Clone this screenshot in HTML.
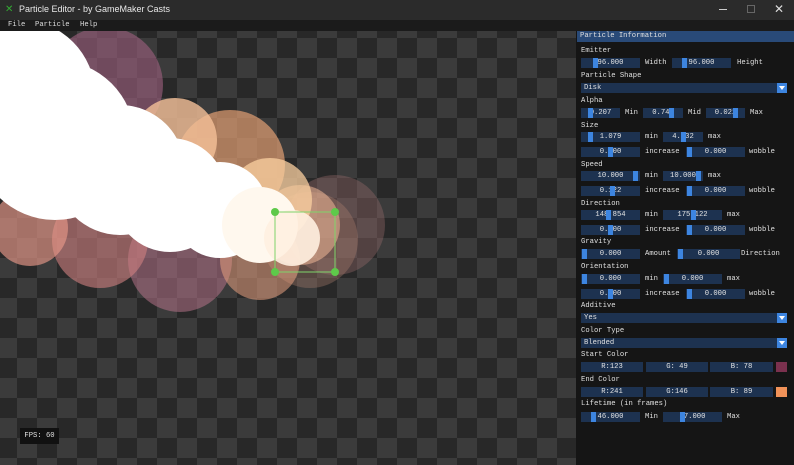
<!DOCTYPE html>
<html><head><style>
*{margin:0;padding:0;box-sizing:border-box}
body{width:794px;height:465px;overflow:hidden;background:#151515;font-family:"Liberation Mono",monospace;position:relative}
#title{position:absolute;left:0;top:0;width:794px;height:20px;background:#2b2b2b;color:#e8e8e8;font:9px "Liberation Sans",sans-serif;line-height:19px}
#menu{position:absolute;left:0;top:20px;width:794px;height:11px;background:#1b1b1b;color:#ddd;font-size:7.2px;line-height:11px}
#canvas{position:absolute;left:0;top:31px;width:576px;height:434px;overflow:hidden;
background:repeating-conic-gradient(#3b3b3b 0 25%,#282828 0 50%);background-size:40px 40px;background-position:-3px 7px}
#panel{position:absolute;left:577px;top:31px;width:217px;height:434px;background:#151515;color:#e0e0e0;font-size:7.2px}
.a{position:absolute;line-height:10px;white-space:pre}
.i{position:absolute;height:10px;background:#1d3250;line-height:10px;text-align:center;color:#e4e4e4;font-size:7.2px;overflow:hidden}
.g{position:absolute;top:0;width:5px;height:10px;background:#3d85e0}
.c{position:absolute;left:4px;width:206px;height:10px;background:#1d3250;line-height:10px;padding-left:3px}
.c:after{content:"";position:absolute;right:0;top:0;width:10px;height:10px;background:#3d85e0}
.c b{position:absolute;right:2px;top:3px;width:0;height:0;border-left:3px solid transparent;border-right:3px solid transparent;border-top:4px solid #fff;z-index:2}
</style></head><body>
<div id="title"><span style="position:absolute;left:5px;top:5px;width:10px;height:10px;color:#3a3;font-size:10px;line-height:10px">✕</span><span style="position:absolute;left:19px">Particle Editor - by GameMaker Casts</span>
<span style="position:absolute;left:719px;top:9px;width:8px;height:1px;background:#ccc"></span>
<span style="position:absolute;left:747px;top:5px;width:8px;height:8px;border:1px solid #666"></span>
<span style="position:absolute;left:774px;top:0;color:#ddd;font-size:12px">✕</span></div>
<div id="menu"><span class="a" style="left:8px;top:0">File</span><span class="a" style="left:35px;top:0">Particle</span><span class="a" style="left:80px;top:0">Help</span></div>
<div id="canvas">
<svg width="576" height="434" style="position:absolute;left:0;top:0">
<g transform="translate(0,-31)">
<circle cx="335" cy="225" r="50" fill="#a07070" opacity=".35"/>
<circle cx="310" cy="240" r="48" fill="#b08070" opacity=".35"/>
<circle cx="180" cy="260" r="52" fill="#c07890" opacity=".5"/>
<circle cx="100" cy="240" r="48" fill="#d08080" opacity=".6"/>
<circle cx="30" cy="228" r="38" fill="#e89888" opacity=".65"/>
<circle cx="260" cy="260" r="40" fill="#e8a080" opacity=".55"/>
<circle cx="105" cy="85" r="58" fill="#a06080" opacity=".6"/>
<circle cx="230" cy="165" r="55" fill="#f0a878" opacity=".65"/>
<circle cx="175" cy="140" r="42" fill="#f5c098" opacity=".8"/>
<circle cx="300" cy="225" r="40" fill="#f0b898" opacity=".55"/>
<circle cx="270" cy="200" r="42" fill="#fbd0a0" opacity=".75"/>
<circle cx="20" cy="95" r="75" fill="#fff"/>
<circle cx="55" cy="140" r="80" fill="#fff"/>
<circle cx="120" cy="170" r="65" fill="#fff"/>
<circle cx="170" cy="195" r="57" fill="#fff"/>
<circle cx="220" cy="210" r="48" fill="#fff"/>
<circle cx="260" cy="225" r="38" fill="#fff8ee"/>
<circle cx="292" cy="238" r="28" fill="#fff0e0" opacity=".9"/>
<rect x="275" y="212" width="60" height="60" fill="none" stroke="#7fd46a" stroke-width="1"/>
<circle cx="275" cy="212" r="4" fill="#5ec94a"/><circle cx="335" cy="212" r="4" fill="#5ec94a"/>
<circle cx="275" cy="272" r="4" fill="#5ec94a"/><circle cx="335" cy="272" r="4" fill="#5ec94a"/>
</g></svg>
<div style="position:absolute;left:20px;top:397px;width:39px;height:16px;background:#111;color:#e0e0e0;font-size:7.2px;line-height:16px;text-align:center">FPS: 60</div>
</div>
<div id="panel">
<div style="position:absolute;left:0;top:0;width:217px;height:11px;background:#294a78"></div>
<div class="a" style="left:3px;top:0;line-height:11px">Particle Information</div>
<div class="a" style="left:4px;top:15px">Emitter</div>
<div class="i" style="left:4px;top:27px;width:59px"><i class="g" style="left:12px"></i>96.000</div><div class="a" style="left:68px;top:27px">Width</div>
<div class="i" style="left:95px;top:27px;width:59px"><i class="g" style="left:10px"></i>96.000</div><div class="a" style="left:160px;top:27px">Height</div>
<div class="a" style="left:4px;top:40px">Particle Shape</div>
<div class="c" style="top:52px">Disk<b></b></div>
<div class="a" style="left:4px;top:65px">Alpha</div>
<div class="i" style="left:4px;top:77px;width:39px"><i class="g" style="left:7px"></i>0.207</div><div class="a" style="left:48px;top:77px">Min</div>
<div class="i" style="left:66px;top:77px;width:40px"><i class="g" style="left:26px"></i>0.740</div><div class="a" style="left:111px;top:77px">Mid</div>
<div class="i" style="left:129px;top:77px;width:39px"><i class="g" style="left:27px"></i>0.022</div><div class="a" style="left:173px;top:77px">Max</div>
<div class="a" style="left:4px;top:90px">Size</div>
<div class="i" style="left:4px;top:101px;width:59px"><i class="g" style="left:7px"></i>1.079</div><div class="a" style="left:68px;top:101px">min</div>
<div class="i" style="left:86px;top:101px;width:40px"><i class="g" style="left:18px"></i>4.432</div><div class="a" style="left:131px;top:101px">max</div>
<div class="i" style="left:4px;top:116px;width:59px"><i class="g" style="left:27px"></i>0.000</div><div class="a" style="left:68px;top:116px">increase</div>
<div class="i" style="left:109px;top:116px;width:59px"><i class="g" style="left:1px"></i>0.000</div><div class="a" style="left:172px;top:116px">wobble</div>
<div class="a" style="left:4px;top:129px">Speed</div>
<div class="i" style="left:4px;top:140px;width:59px"><i class="g" style="left:52px"></i>10.000</div><div class="a" style="left:68px;top:140px">min</div>
<div class="i" style="left:86px;top:140px;width:40px"><i class="g" style="left:33px"></i>10.000</div><div class="a" style="left:131px;top:140px">max</div>
<div class="i" style="left:4px;top:155px;width:59px"><i class="g" style="left:29px"></i>0.122</div><div class="a" style="left:68px;top:155px">increase</div>
<div class="i" style="left:109px;top:155px;width:59px"><i class="g" style="left:1px"></i>0.000</div><div class="a" style="left:172px;top:155px">wobble</div>
<div class="a" style="left:4px;top:168px">Direction</div>
<div class="i" style="left:4px;top:179px;width:59px"><i class="g" style="left:25px"></i>148.854</div><div class="a" style="left:68px;top:179px">min</div>
<div class="i" style="left:86px;top:179px;width:59px"><i class="g" style="left:28px"></i>175.122</div><div class="a" style="left:150px;top:179px">max</div>
<div class="i" style="left:4px;top:194px;width:59px"><i class="g" style="left:27px"></i>0.000</div><div class="a" style="left:68px;top:194px">increase</div>
<div class="i" style="left:109px;top:194px;width:59px"><i class="g" style="left:1px"></i>0.000</div><div class="a" style="left:172px;top:194px">wobble</div>
<div class="a" style="left:4px;top:206px">Gravity</div>
<div class="i" style="left:4px;top:218px;width:59px"><i class="g" style="left:1px"></i>0.000</div><div class="a" style="left:68px;top:218px">Amount</div>
<div class="i" style="left:100px;top:218px;width:63px"><i class="g" style="left:1px"></i>0.000</div><div class="a" style="left:164px;top:218px">Direction</div>
<div class="a" style="left:4px;top:231px">Orientation</div>
<div class="i" style="left:4px;top:243px;width:59px"><i class="g" style="left:1px"></i>0.000</div><div class="a" style="left:68px;top:243px">min</div>
<div class="i" style="left:86px;top:243px;width:59px"><i class="g" style="left:1px"></i>0.000</div><div class="a" style="left:150px;top:243px">max</div>
<div class="i" style="left:4px;top:258px;width:59px"><i class="g" style="left:27px"></i>0.000</div><div class="a" style="left:68px;top:258px">increase</div>
<div class="i" style="left:109px;top:258px;width:59px"><i class="g" style="left:1px"></i>0.000</div><div class="a" style="left:172px;top:258px">wobble</div>
<div class="a" style="left:4px;top:270px">Additive</div>
<div class="c" style="top:282px">Yes<b></b></div>
<div class="a" style="left:4px;top:295px">Color Type</div>
<div class="c" style="top:307px">Blended<b></b></div>
<div class="a" style="left:4px;top:319px">Start Color</div>
<div class="i" style="left:4px;top:331px;width:62px">R:123</div><div class="i" style="left:69px;top:331px;width:62px">G: 49</div><div class="i" style="left:133px;top:331px;width:63px">B: 78</div>
<div style="position:absolute;left:199px;top:331px;width:11px;height:10px;background:#7b314e"></div>
<div class="a" style="left:4px;top:344px">End Color</div>
<div class="i" style="left:4px;top:356px;width:62px">R:241</div><div class="i" style="left:69px;top:356px;width:62px">G:146</div><div class="i" style="left:133px;top:356px;width:63px">B: 89</div>
<div style="position:absolute;left:199px;top:356px;width:11px;height:10px;background:#f19259"></div>
<div class="a" style="left:4px;top:368px">Lifetime (in frames)</div>
<div class="i" style="left:4px;top:381px;width:59px"><i class="g" style="left:10px"></i>46.000</div><div class="a" style="left:68px;top:381px">Min</div>
<div class="i" style="left:86px;top:381px;width:59px"><i class="g" style="left:17px"></i>97.000</div><div class="a" style="left:150px;top:381px">Max</div>
</div>
</body></html>
